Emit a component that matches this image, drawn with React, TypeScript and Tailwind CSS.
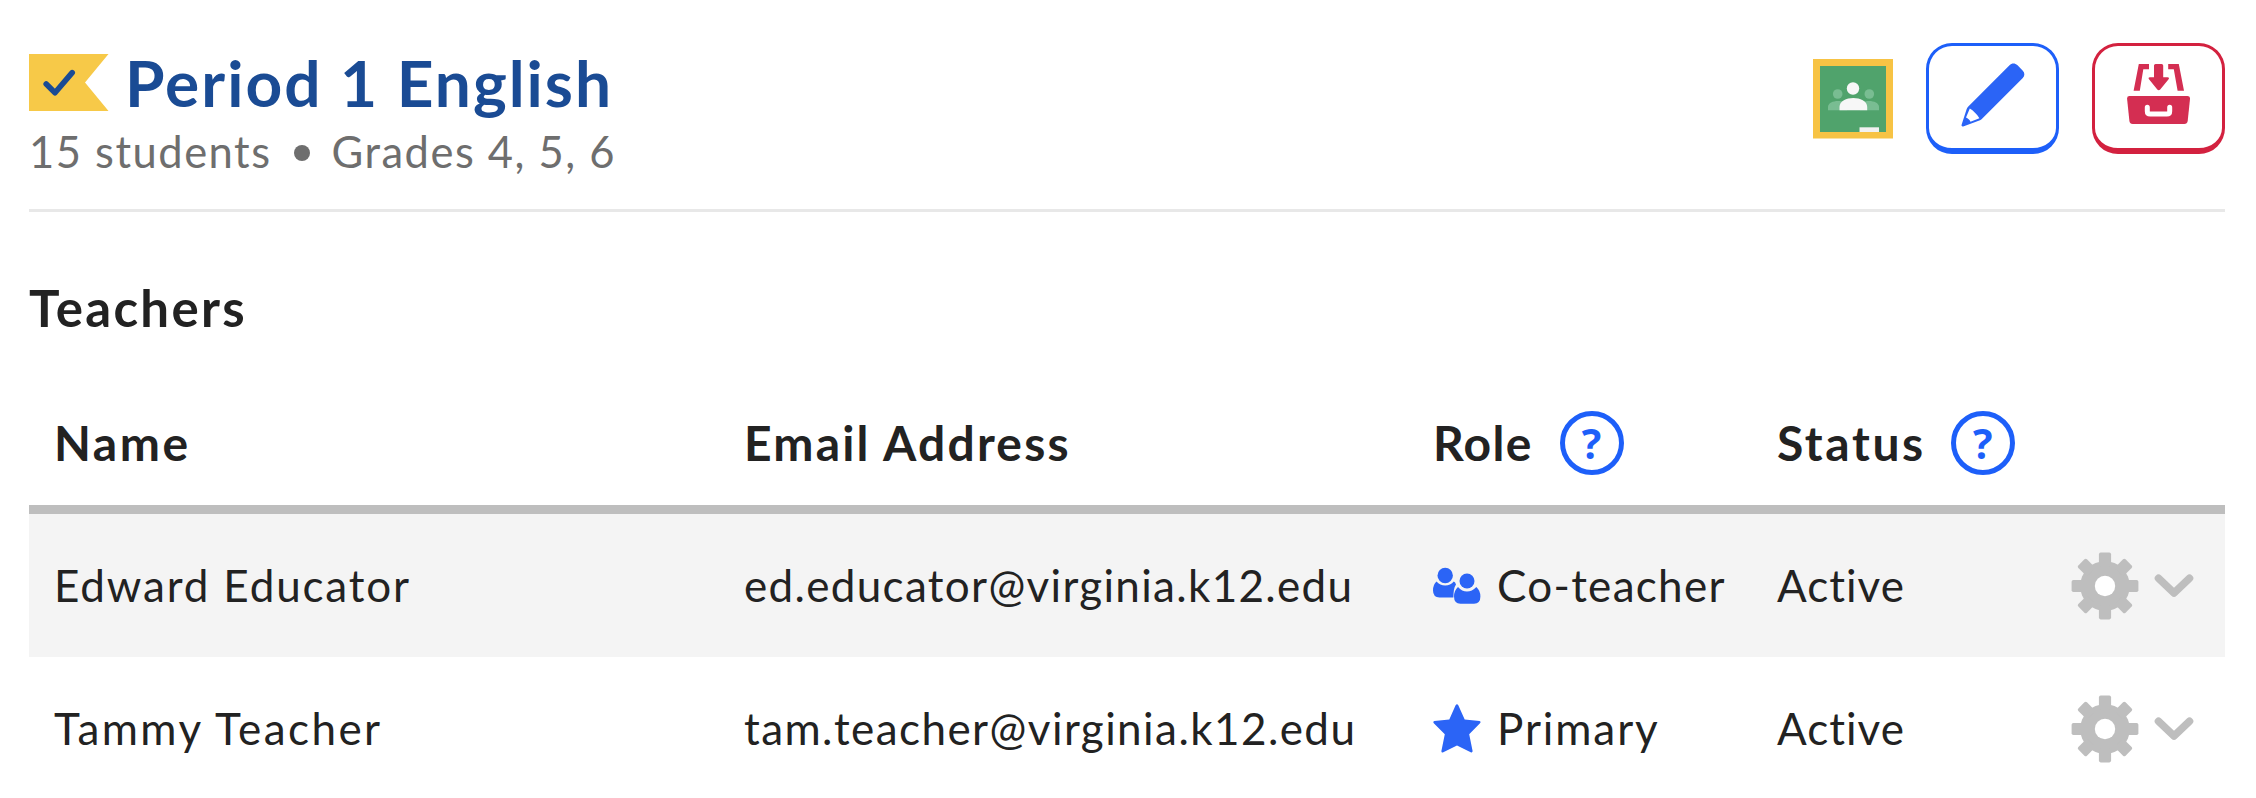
import type { ReactNode } from "react";

type Teacher = {
  name: string;
  nameClass: string;
  email: string;
  emailClass: string;
  role: string;
  roleClass: string;
  roleIcon: ReactNode;
  status: string;
};

function FlagIcon() {
  return (
    <svg width="80" height="57" viewBox="0 0 80 57" fill="none">
      <path d="M0 0H79.5L56 28.5L79.5 57H0Z" fill="#f7c948" />
      <path
        d="M17.2 30L26 38.8L43.2 18.6"
        stroke="#1a4b94"
        strokeWidth="5.6"
        strokeLinecap="round"
        strokeLinejoin="round"
      />
    </svg>
  );
}

function ClassroomIcon() {
  return (
    <svg width="80" height="80" viewBox="0 0 80 80">
      <path d="M0 0H80V79.5H0Z" fill="#f7c344" />
      <path d="M7 7H73V73H7Z" fill="#50a36c" />
      <g fill="#79bd92">
        <circle cx="24.7" cy="35" r="4.8" />
        <circle cx="56.3" cy="35" r="4.8" />
        <path d="M15 51.3V48C15 44 20 42 25 42C30 42 34 44 34 48V51.3Z" />
        <path d="M47 51.3V48C47 44 51 42 56 42C61 42 66 44 66 48V51.3Z" />
      </g>
      <circle cx="40" cy="29.5" r="6.2" fill="#f7f7f7" />
      <path d="M26.5 51.3V48C26.5 42 33.5 39 40.3 39C47 39 54.2 42 54.2 48V51.3Z" fill="#f7f7f7" />
      <path d="M46.5 68.3H66V73H46.5Z" fill="#f1f1f1" />
    </svg>
  );
}

function PencilIcon() {
  return (
    <svg width="64" height="64" viewBox="0 0 64 64" fill="#2b64f6">
      <path d="M48.5 2.3C50.7 0 54 0 56.3 2.1L61.6 7.6C63.9 10 63.9 12.8 61.8 15L21.3 55.6C20.6 56.3 20 56.8 19 57.2L2.2 63.4C1 63.8 0.3 63 0.6 61.8L5.6 46.3C6 45.2 6.5 44.4 7.3 43.6Z" />
      <path d="M8.8 45.5C12.3 47.6 16 51.3 18.4 55.3L9.5 58.7C8.6 56.8 7 55.3 5 54.5Z" fill="#fff" />
    </svg>
  );
}

function ArchiveIcon() {
  return (
    <svg width="63" height="61" viewBox="0 0 63 61" fill="#d42e52">
      <path d="M11.8 0H22V5.3H16.3L12.8 26.7H6.6Z" />
      <path d="M51.8 0H41.2V5.3H46.8L50.6 26.7H57Z" />
      <path d="M27 1.6Q27 0 28.6 0H34.6Q36.2 0 36.2 1.6V13.3H40.5Q43 13.5 41.4 15.6L33.2 25.4Q31.7 27 30.3 25.4L22.2 15.6Q20.5 13.5 23 13.3H27Z" />
      <path d="M2.5 32H60.5Q63.3 32 63 35L60.7 57Q60.2 60 57.3 60H5.7Q2.8 60 2.4 57L0.1 35Q-0.2 32 2.5 32Z" />
      <path
        d="M20.3 43.3V47.2Q20.3 50 23.2 50H39.8Q42.7 50 42.7 47.2V43.3"
        fill="none"
        stroke="#fff"
        strokeWidth="5"
        strokeLinecap="round"
      />
    </svg>
  );
}

function PeopleIcon() {
  return (
    <svg width="48" height="38" viewBox="0 0 48 38" fill="#2b64f6">
      <circle cx="12.2" cy="8.5" r="7.7" />
      <path d="M3.5 14.5Q7 18.5 12.2 18.5Q17.5 18.5 20.8 14.5Q22.3 15.2 23 17.5Q20.4 21 20.4 30.5H6.5Q0 30.2 0 23.5Q0 17.5 3.5 14.5Z" />
      <circle cx="34" cy="14" r="7.5" />
      <path d="M25 20Q29 24.5 34 24.5Q39 24.5 43.3 20Q47.4 23.5 47.4 29.5Q47.4 36.5 41 36.8H27.5Q21 36.5 21 29.5Q21 23.5 25 20Z" />
    </svg>
  );
}

function StarIcon() {
  return (
    <svg width="48" height="49" viewBox="0 0 48 49" fill="#2b64f6">
      <path d="M22.6 1.2Q24 -0.8 25.3 1.2L31.7 15.6L46.5 17.1Q48.4 17.6 47 19.3L36.2 30.2L39.6 46.9Q39.7 49 37.7 48.3L24 41.5L10.3 48.3Q8.2 49 8.4 46.9L11.8 30.2L0.8 19.3Q-0.5 17.6 1.4 17.1L16.3 15.6Z" />
    </svg>
  );
}

const GEAR_TEETH = [0, 45, 90, 135, 180, 225, 270, 315];

function GearIcon() {
  return (
    <svg width="68" height="68" viewBox="-34 -34 68 68" fill="#bebebe">
      <circle r="24.8" />
      {GEAR_TEETH.map((angle) => (
        <rect key={angle} x="-6.1" y="-33.4" width="12.2" height="14" rx="1.8" transform={`rotate(${angle})`} />
      ))}
      <circle r="10.2" fill="#fff" />
    </svg>
  );
}

function ChevronIcon() {
  return (
    <svg width="40" height="24" viewBox="0 0 40 24" fill="none">
      <path
        d="M4.5 4.3L20 19L35.5 4.3"
        stroke="#bebebe"
        strokeWidth="7.6"
        strokeLinecap="round"
        strokeLinejoin="round"
      />
    </svg>
  );
}

function HelpBadge() {
  return (
    <button
      type="button"
      className="flex size-16 items-center justify-center rounded-full border-[5px] border-[#1d5ff9] font-['Open_Sans',sans-serif] text-[41px] leading-none font-bold text-[#1d5ff9]"
    >
      ?
    </button>
  );
}

const TEACHERS: Teacher[] = [
  {
    name: "Edward Educator",
    nameClass: "tracking-[1.85px]",
    email: "ed.educator@virginia.k12.edu",
    emailClass: "tracking-[1.32px]",
    role: "Co-teacher",
    roleClass: "tracking-[1.3px]",
    roleIcon: <PeopleIcon />,
    status: "Active",
  },
  {
    name: "Tammy Teacher",
    nameClass: "tracking-[2.45px]",
    email: "tam.teacher@virginia.k12.edu",
    emailClass: "tracking-[1.43px]",
    role: "Primary",
    roleClass: "tracking-[1.9px]",
    roleIcon: <StarIcon />,
    status: "Active",
  },
];

const COLUMNS = "grid grid-cols-[690px_689px_344px_294px_1fr] items-center pl-[25px]";

export default function App() {
  return (
    <div className="h-[798px] overflow-hidden bg-white pr-[31px] pl-[29px] font-[Lato,sans-serif] text-[#222]">
      <header className="flex h-[212px] items-start justify-between border-b-[3px] border-[#e8e8e8]">
        <div className="pt-[45px]">
          <div className="flex h-[76px] items-center">
            <div className="-mt-0.5">
              <FlagIcon />
            </div>
            <h1 className="ml-4 text-[64px] leading-[76px] font-bold tracking-[2px] whitespace-nowrap text-[#1a4b94]">
              Period 1 English
            </h1>
          </div>
          <div className="flex h-[60px] items-center text-[43.5px] leading-[60px] whitespace-nowrap text-[#6e6e6e]">
            <span className="tracking-[1.5px]">15 students</span>
            <span className="mt-1 mr-[22px] ml-[22px] size-4 rounded-full bg-[#6e6e6e]" />
            <span className="tracking-[1.5px]">Grades 4, 5, 6</span>
          </div>
        </div>

        <div className="flex items-start pt-[43px]">
          <div className="mt-4">
            <ClassroomIcon />
          </div>
          <button
            type="button"
            className="ml-[33px] flex h-[111px] w-[133px] justify-center rounded-[26px] border-[3px] border-b-[6px] border-[#1d5ff9] pt-[17px]"
          >
            <PencilIcon />
          </button>
          <button
            type="button"
            className="ml-[33px] flex h-[111px] w-[133px] justify-center rounded-[26px] border-[3px] border-b-[6px] border-[#d3213f] pt-[18px]"
          >
            <ArchiveIcon />
          </button>
        </div>
      </header>

      <h2 className="mt-[66px] h-[60px] text-[51px] leading-[60px] font-bold tracking-[2.3px]">Teachers</h2>

      <div className={`${COLUMNS} mt-[43px] h-[133px] border-b-[9px] border-[#bebebe] text-[48px] font-bold`}>
        <div className="tracking-[2.5px]">Name</div>
        <div className="tracking-[2.2px]">Email Address</div>
        <div className="flex items-center gap-[27px]">
          <span className="tracking-[1.3px]">Role</span>
          <HelpBadge />
        </div>
        <div className="flex items-center gap-[25px]">
          <span className="tracking-[2.6px]">Status</span>
          <HelpBadge />
        </div>
      </div>

      {TEACHERS.map((teacher) => (
        <div key={teacher.email} className={`${COLUMNS} h-[143px] whitespace-nowrap text-[44px] odd:bg-white even:bg-[#f4f4f4]`}>
          <div className={`-mt-0.5 ${teacher.nameClass}`}>{teacher.name}</div>
          <div className={`-mt-0.5 ${teacher.emailClass}`}>{teacher.email}</div>
          <div className="flex items-center gap-4">
            {teacher.roleIcon}
            <span className={`-mt-0.5 ${teacher.roleClass}`}>{teacher.role}</span>
          </div>
          <div className="-mt-0.5 tracking-[1px]">{teacher.status}</div>
          <div className="flex items-center gap-[15px]">
            <GearIcon />
            <ChevronIcon />
          </div>
        </div>
      ))}
    </div>
  );
}
